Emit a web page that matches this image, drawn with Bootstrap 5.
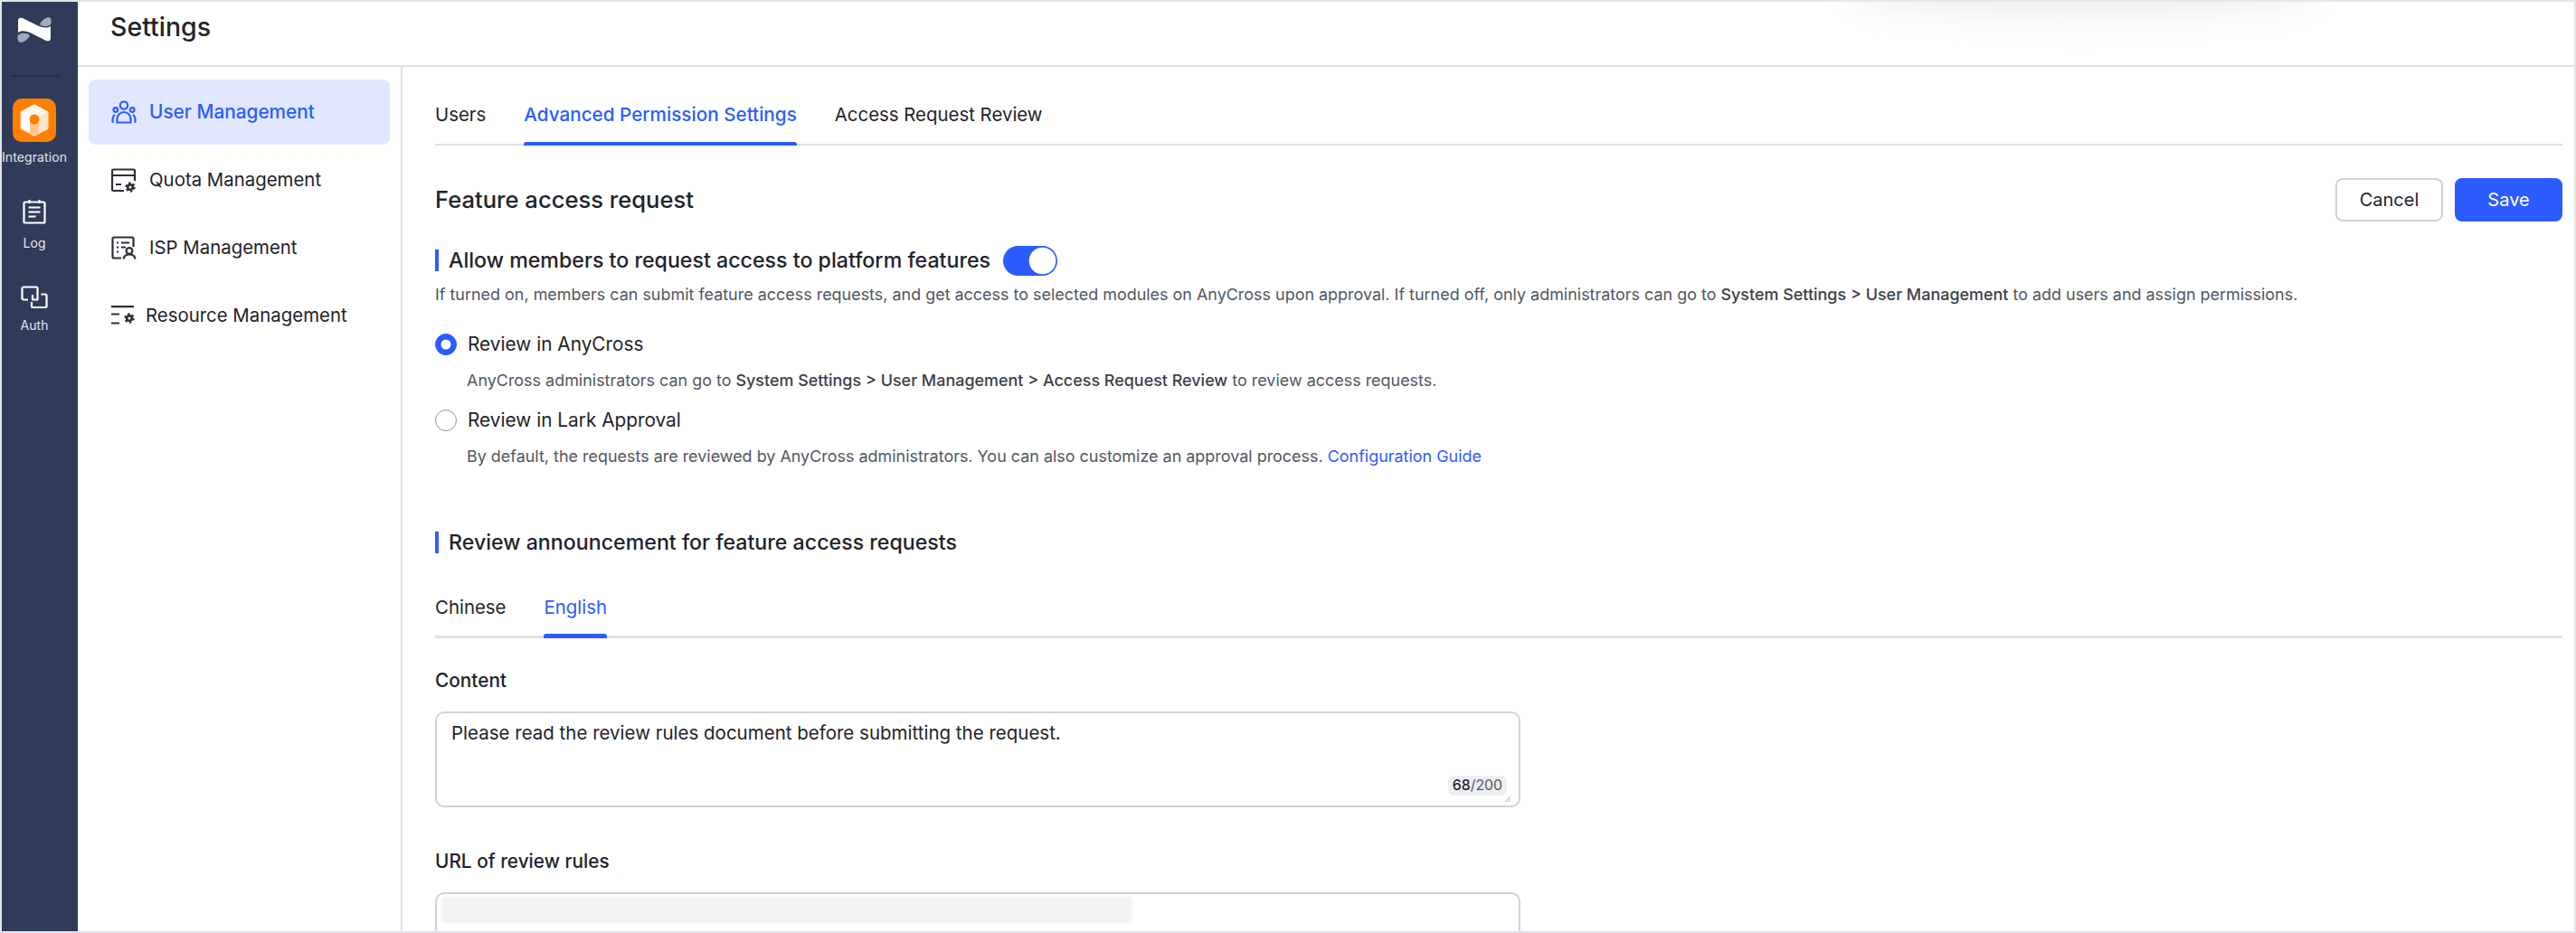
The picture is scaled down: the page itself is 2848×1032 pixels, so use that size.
<!DOCTYPE html>
<html lang="en">
<head>
  <meta charset="UTF-8">
  <title>Settings</title>
  <link rel="stylesheet" href="https://cdn.jsdelivr.net/npm/bootstrap@5.3.0/dist/css/bootstrap.min.css">
  <style>
    html, body {
      height: 100%;
      overflow: hidden;
      background: #fff;
      font-family: "Inter", "Liberation Sans", sans-serif;
      color: #1f2329;
    }

    .app-frame {
      width: 2848px;
      height: 1032px;
      border: 2px solid #e4e5e7;
      overflow: hidden;
      position: relative;
    }

    /* dark rail */
    .rail {
      width: 84px;
      flex: 0 0 84px;
      padding-right: 12px;
      background: #2f3b59;
      color: #e4e7ef;
    }

    .rail-logo { height: 72px; padding-top: 16px; }
    .rail-sep { width: 54px; height: 2px; background: #272f48; margin: 9px auto 0; flex: none; }
    .rail-item { font-size: 14px; line-height: 20px; letter-spacing: .1px; white-space: nowrap; }
    .rail-app { width: 48px; height: 48px; border-radius: 10px; background: #ff8000; margin-bottom: 7px; }
    .rail-item svg { display: block; }
    .rail-log { margin-top: 36px; }
    .rail-log svg { margin-bottom: 11px; }
    .rail-auth { margin-top: 37px; }
    .rail-auth svg { margin-bottom: 8px; }

    /* header */
    .page-head {
      height: 72px;
      flex: none;
      border-bottom: 2px solid #dee0e3;
      padding-left: 36px;
      font-size: 28.500px;
      font-weight: 450;
      line-height: 56px;
      color: #1f2329;
    }

    /* left menu */
    .side-menu {
      width: 359px;
      flex: 0 0 359px;
      border-right: 2px solid #dee0e3;
      padding: 14px 12px 0;
    }

    .menu-row {
      height: 72px;
      margin-bottom: 3px;
      padding-left: 25px;
      gap: 14px;
      font-size: 20.400px;
      border-radius: 8px;
      color: #1f2329;
      text-decoration: none;
    }

    .menu-row.on { background: #e1e7fe; color: #2b5cff; font-weight: 450; font-size: 20.800px; }
    .menu-row.tight { gap: 11px; }

    /* content */
    .pane { padding-left: 36px; padding-right: 13px; }

    .tab-strip { gap: 42px; border-bottom: 2px solid #dee0e3; }
    .tab-strip .nav-link {
      padding: 0;
      color: #1f2329;
      font-size: 20.400px;
      line-height: 30px;
      position: relative;
    }
    .tab-strip .nav-link.active { color: #2b5cff; font-weight: 450; font-size: 20.700px; }
    .tab-strip .nav-link.active::after {
      content: "";
      position: absolute;
      left: 0;
      right: 0;
      bottom: -2px;
      height: 4px;
      border-radius: 3px 3px 0 0;
      background: #2b5cff;
    }
    .tabs-top { height: 87px; padding-top: 38px; }
    .tabs-top .nav-link { padding-bottom: 17px; }
    .tabs-lang { height: 66px; padding-top: 17px; margin-top: 28px; gap: 42px; border-bottom-width: 3px; }
    .tabs-lang .nav-link { padding-bottom: 16px; }
    .tabs-lang .nav-link.active { font-weight: 400; font-size: 20.400px; }
    .tabs-lang .nav-link.active::after { bottom: -3px; height: 5px; }

    .feature-row { margin-top: 36px; height: 48px; }
    .feature-title { font-size: 25.600px; font-weight: 450; line-height: 48px; }
    .act-gap { gap: 13px; }
    .act-btn { width: 119px; height: 48px; font-size: 20px; padding: 0; border-radius: 8px; }
    .act-ghost { background: #fff; border: 2px solid #d0d3d8; color: #1f2329; }
    .act-main { background: #2b5cff; border: 2px solid #2b5cff; color: #fff; }

    .bar-title {
      border-left: 4px solid #2b5cff;
      padding-left: 11px;
      font-size: 23.200px;
      font-weight: 450;
      line-height: 24px;
    }
    .allow-row { height: 34px; margin-top: 26px; gap: 14px; }
    .announce-row { height: 24px; margin-top: 68px; margin-bottom: 5px; }

    .allow-row .form-check-input {
      width: 60px;
      height: 33px;
      margin: 0;
      border: 0;
      background-color: #2b5cff;
      background-position: right 2px center;
      background-image: url("data:image/svg+xml,%3csvg xmlns='http://www.w3.org/2000/svg' viewBox='-4 -4 8 8'%3e%3ccircle r='3.6' fill='%23fff'/%3e%3c/svg%3e");
    }

    .help-text { font-size: 17.960px; line-height: 30px; color: #51565f; }
    .help-text b { font-weight: 500; color: #3c4048; }
    .help-text a { color: #2b5cff; text-decoration: none; }
    .help-main { margin-top: 6px; }
    .help-sub { margin-top: 9px; padding-left: 35px; }

    .pick-row { height: 32px; gap: 12px; font-size: 20.800px; line-height: 32px; }
    .pick-row .form-check-input {
      width: 24px;
      height: 24px;
      margin: 0;
      flex: none;
      background-color: #fff;
      border: 1px solid #8f959e;
    }
    .pick-row .form-check-input:checked { background-color: #2b5cff; border-color: #2b5cff; }

    .field-label { font-size: 20.800px; font-weight: 450; line-height: 30px; }
    .field-top { margin-top: 32px; }
    .field-next { margin-top: 45px; }
    .note-box {
      width: 1200px;
      height: 106px;
      margin-top: 19px;
      border: 2px solid #d0d3d8;
      border-radius: 10px;
      padding: 7px 16px;
      font-size: 20.500px;
      line-height: 30px;
      color: #1f2329;
      resize: none;
      box-shadow: none;
    }
    .note-wrap { width: 1200px; position: relative; }
    .char-count {
      position: absolute;
      right: 15px;
      bottom: 13px;
      height: 22px;
      padding: 0 5px;
      border-radius: 6px;
      background: #eceef0;
      font-size: 15.800px;
      line-height: 22px;
      color: #51565f;
    }
    .char-count b { font-weight: 500; color: #1f2329; }
    .grip {
      position: absolute;
      right: 10px;
      bottom: 5px;
    }
    .url-box {
      width: 1200px;
      height: 60px;
      margin-top: 19px;
      border: 2px solid #d0d3d8;
      border-radius: 10px;
      padding: 3px 5px;
    }
    .blur-strip { width: 763px; height: 29px; background: #f1f2f3; filter: blur(1.500px); }

    .head-glow {
      position: absolute;
      left: 2040px;
      top: -44px;
      width: 520px;
      height: 62px;
      border-radius: 50%;
      background: #efefef;
      filter: blur(16px);
    }
  </style>
</head>
<body>

<div class="app-frame d-flex">
  <aside class="rail d-flex flex-column align-items-center">
    <div class="rail-logo">
      <svg width="38" height="30" viewBox="0 0 38 30">
        <path d="M25 9 C27 4 32 1 36 1 C38 3 38 7 37 9 C34 12 28 12 25 9Z" fill="#a3aabd"/>
        <path d="M14 21 C12 26 7 29 3 29 C0 27 0 23 1 21 C4 18 11 18 14 21Z" fill="#a3aabd"/>
        <path d="M1 5 C1 2 3 1 6 2 L16 7 C22 10 30 15 37 11 L37 24 C37 27 35 28 32 27 L20 21 C14 18 7 14 1 18Z" fill="#fff"/>
      </svg>
    </div>
    <div class="rail-sep"></div>

    <div class="rail-item d-flex flex-column align-items-center mt-4">
      <div class="rail-app d-flex align-items-center justify-content-center">
        <svg width="32" height="36" viewBox="0 0 32 36">
          <path d="M16 3 L29 10 L29 26 L16 33 L3 26 L3 10Z" fill="#ffe7cf" stroke="#ffe7cf" stroke-width="5" stroke-linejoin="round"/>
          <path d="M2 9 L16 17 L16 34 L2 26Z" fill="#fff"/>
          <path d="M30 9 L16 17 L16 34 L30 26Z" fill="#ffe2c4"/>
          <path d="M11 15 L21 15 L21 33 L16 35 L11 33Z" fill="#ffc690"/>
          <path d="M16 1 L30 9 L16 17 L2 9Z" fill="#fff6ec"/>
          <circle cx="16" cy="17" r="5.500" fill="#ff8000"/>
        </svg>
      </div>
      <span>Integration</span>
    </div>

    <div class="rail-item rail-log d-flex flex-column align-items-center">
      <svg width="26" height="28" viewBox="0 0 26 28" fill="none" stroke="#fff" stroke-width="2.2">
        <rect x="1.500" y="3.500" width="23" height="23" rx="1.500"/>
        <path d="M7.500 1v4M18.500 1v4M6.500 9.500h13M6.500 14.500h13M6.500 19.500h8"/>
      </svg>
      <span>Log</span>
    </div>

    <div class="rail-item rail-auth d-flex flex-column align-items-center">
      <svg width="30" height="26" viewBox="0 0 30 26" fill="none" stroke="#fff" stroke-width="2.2" stroke-linejoin="round">
        <path d="M8 15.500H3a1.500 1.500 0 0 1-1.500-1.500V3A1.500 1.500 0 0 1 3 1.500h14A1.500 1.500 0 0 1 18.500 3v12.500H13V10"/>
        <path d="M22.500 9.500H27a1.500 1.500 0 0 1 1.500 1.500v11.500A1.500 1.500 0 0 1 27 24H13.500a1.500 1.500 0 0 1-1.500-1.500V18"/>
      </svg>
      <span>Auth</span>
    </div>
  </aside>

  <div class="flex-grow-1 d-flex flex-column min-w-0">
    <header class="page-head">Settings</header>

    <div class="d-flex flex-grow-1">
      <nav class="side-menu">
        <a class="menu-row on d-flex align-items-center" href="#">
          <svg width="28" height="26" viewBox="0 0 28 26" fill="none" stroke="#2b5cff" stroke-width="2.2" stroke-linecap="round">
            <circle cx="14" cy="5.500" r="4.200"/>
            <circle cx="4.800" cy="10.500" r="2.300"/>
            <circle cx="23.200" cy="10.500" r="2.300"/>
            <path d="M6.500 24.500v-4a7.500 7.500 0 0 1 15 0v4ZM1.500 24v-3c0-2 .5-3 1.800-4.500M26.500 24v-3c0-2-.5-3-1.800-4.500"/>
          </svg>
          <span>User Management</span>
        </a>
        <a class="menu-row d-flex align-items-center" href="#">
          <svg width="28" height="27" viewBox="0 0 28 27" fill="none" stroke="#2a2f37" stroke-width="2.2">
            <path d="M14 25H2.500A1.500 1.500 0 0 1 1 23.500V3a1.500 1.500 0 0 1 1.500-1.500h22A1.500 1.500 0 0 1 26 3v11M1 8h25M5 18h6"/>
            <circle cx="21" cy="21" r="2.800" stroke-width="2.600"/>
            <circle cx="21" cy="21" r="4.800" stroke-width="1.800" stroke-dasharray="2.500 2.530"/>
          </svg>
          <span>Quota Management</span>
        </a>
        <a class="menu-row d-flex align-items-center" href="#">
          <svg width="28" height="26" viewBox="0 0 28 26" fill="none" stroke="#2a2f37" stroke-width="2.2">
            <path d="M11 24.500H3A1.500 1.500 0 0 1 1.500 23V3A1.500 1.500 0 0 1 3 1.500h20A1.500 1.500 0 0 1 24.500 3v9"/>
            <path d="M6 7.500h2M11 7.500h9M6 12.500h2M11 12.500h5M6 17.500h2"/>
            <circle cx="20" cy="16.500" r="3.400"/>
            <path d="M13.500 25.500c.5-3.500 3-5 6.500-5s6 1.500 6.500 5"/>
          </svg>
          <span>ISP Management</span>
        </a>
        <a class="menu-row tight d-flex align-items-center" href="#">
          <svg width="27" height="22" viewBox="0 0 27 22" fill="none" stroke="#2a2f37" stroke-width="2.2">
            <path d="M0 1.200h25M0 9.500h9M0 19.500h9"/>
            <circle cx="20" cy="14" r="2.800" stroke-width="2.600"/>
            <circle cx="20" cy="14" r="4.800" stroke-width="1.800" stroke-dasharray="2.500 2.530"/>
          </svg>
          <span>Resource Management</span>
        </a>
      </nav>

      <main class="pane flex-grow-1 overflow-hidden">
        <ul class="nav tab-strip tabs-top">
          <li class="nav-item"><a class="nav-link" href="#">Users</a></li>
          <li class="nav-item"><a class="nav-link active" href="#">Advanced Permission Settings</a></li>
          <li class="nav-item"><a class="nav-link" href="#">Access Request Review</a></li>
        </ul>

        <div class="feature-row d-flex justify-content-between align-items-center">
          <div class="feature-title">Feature access request</div>
          <div class="d-flex act-gap">
            <button type="button" class="btn act-btn act-ghost">Cancel</button>
            <button type="button" class="btn act-btn act-main">Save</button>
          </div>
        </div>

        <div class="allow-row d-flex align-items-center">
          <div class="bar-title">Allow members to request access to platform features</div>
          <div class="form-check form-switch m-0 p-0 d-flex">
            <input class="form-check-input" type="checkbox" checked>
          </div>
        </div>
        <div class="help-text help-main">If turned on, members can submit feature access requests, and get access to selected modules on AnyCross upon approval. If turned off, only administrators can go to <b>System Settings &gt; User Management</b> to add users and assign permissions.</div>

        <label class="pick-row d-flex align-items-center mt-4">
          <input class="form-check-input" type="radio" name="review" checked>
          <span>Review in AnyCross</span>
        </label>
        <div class="help-text help-sub">AnyCross administrators can go to <b>System Settings &gt; User Management &gt; Access Request Review</b> to review access requests.</div>

        <label class="pick-row d-flex align-items-center" style="margin-top:13px">
          <input class="form-check-input" type="radio" name="review">
          <span>Review in Lark Approval</span>
        </label>
        <div class="help-text help-sub">By default, the requests are reviewed by AnyCross administrators. You can also customize an approval process. <a href="#">Configuration Guide</a></div>

        <div class="bar-title announce-row">Review announcement for feature access requests</div>

        <ul class="nav tab-strip tabs-lang">
          <li class="nav-item"><a class="nav-link" href="#">Chinese</a></li>
          <li class="nav-item"><a class="nav-link active" href="#">English</a></li>
        </ul>

        <div class="field-label field-top">Content</div>
        <div class="note-wrap">
          <textarea class="form-control note-box" rows="2">Please read the review rules document before submitting the request.</textarea>
          <span class="char-count"><b>68</b>/200</span>
          <svg class="grip" width="8" height="8" viewBox="0 0 8 8" stroke="#a9adb3" fill="none"><path d="M7 1 1 7M7 4 4 7"/></svg>
        </div>

        <div class="field-label field-next">URL of review rules</div>
        <div class="url-box"><div class="blur-strip"></div></div>
      </main>
    </div>
  </div>
  <div class="head-glow"></div>
</div>

<script src="https://cdn.jsdelivr.net/npm/bootstrap@5.3.0/dist/js/bootstrap.bundle.min.js"></script>
</body>
</html>
